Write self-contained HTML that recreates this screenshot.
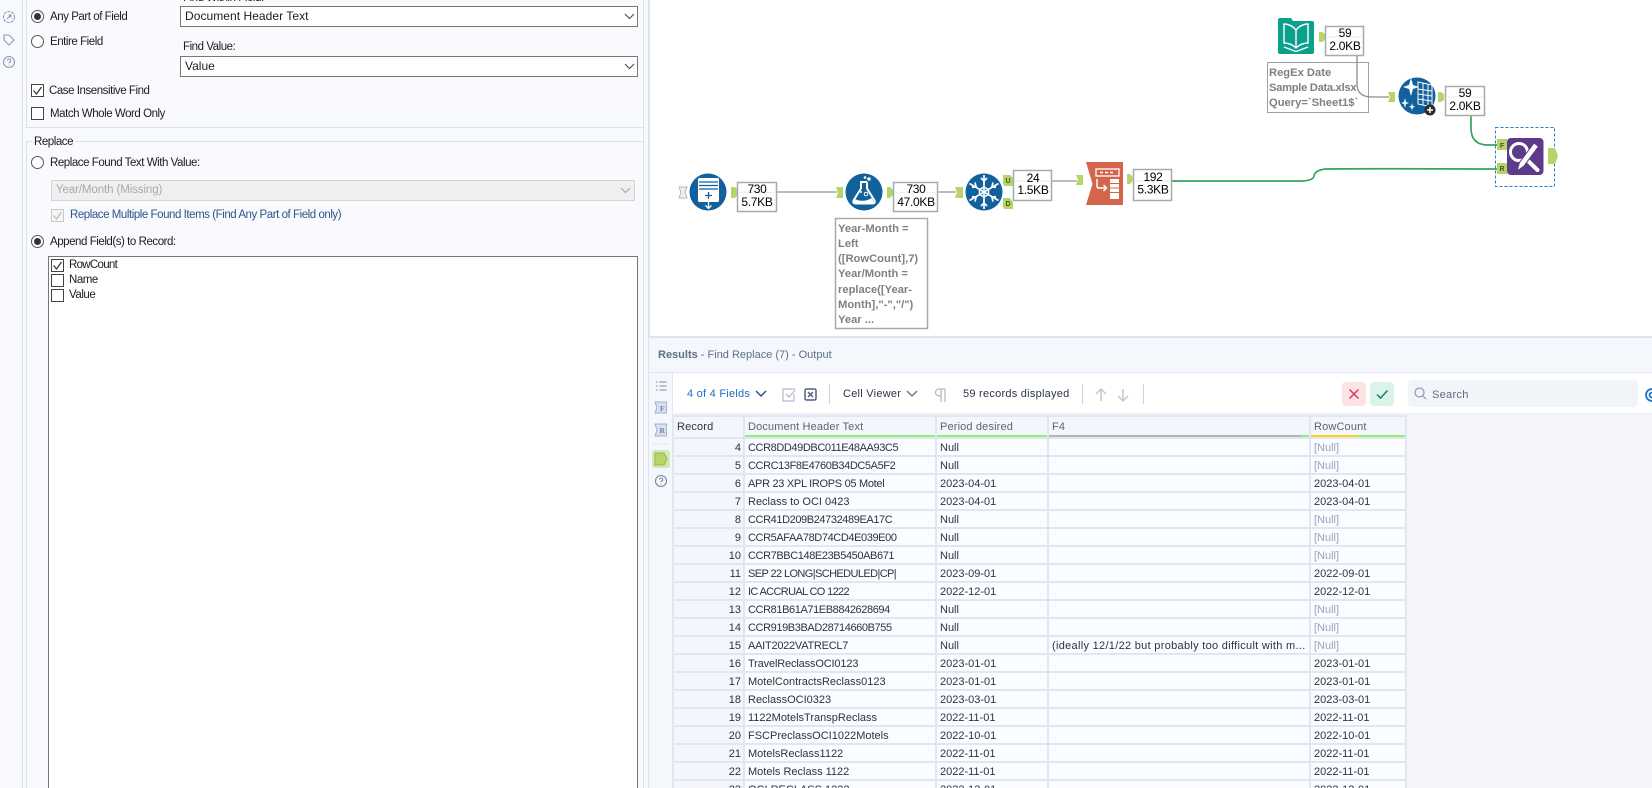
<!DOCTYPE html>
<html><head><meta charset="utf-8"><style>
html,body{margin:0;padding:0;width:1652px;height:788px;overflow:hidden;background:#fff}
body{position:relative;font-family:"Liberation Sans",sans-serif;color:#222}
.a{position:absolute;box-sizing:border-box}
.t{position:absolute;white-space:nowrap;font-size:11.5px;line-height:14px;color:#1c1c1c;letter-spacing:-.45px}
.rad{position:absolute;width:13px;height:13px;border:1px solid #555;border-radius:50%;background:#fff;box-sizing:border-box}
.rad.on:after{content:"";position:absolute;left:2px;top:2px;width:7px;height:7px;border-radius:50%;background:#333}
.chk{position:absolute;width:13px;height:13px;border:1px solid #444;background:#fff;box-sizing:border-box}
.sel{position:absolute;border:1px solid #777;background:#fff;box-sizing:border-box}
table{position:absolute;left:672px;top:415px;border-collapse:separate;border-spacing:2px;background:#dfe7f3;table-layout:fixed;width:735px}
td,th{height:16px;line-height:14px;font-size:11px;font-weight:normal;text-align:left;background:#fbfcff;color:#2a3442;white-space:nowrap;overflow:hidden;padding:2px 0 0 3px;box-sizing:border-box;vertical-align:top}
th{height:20px;padding-top:3px;background:#f4f6fb;color:#56657c;letter-spacing:.15px}
td:first-child{text-align:right;padding-right:2px;padding-left:0;background:#f4f6fb}
th:first-child{color:#2a3442;padding-left:3px}
.n{color:#9aa2c4}
.g{background:linear-gradient(#96ee74,#96ee74) bottom/100% 2px no-repeat,#f4f6fb}
.c{letter-spacing:-.4px}
.d{letter-spacing:-.65px}
</style></head><body>

<!-- left strip -->
<div class="a" style="left:0;top:0;width:22px;height:788px;background:#f7f9fd"></div>
<div class="a" style="left:22px;top:0;width:1px;height:788px;background:#d7dde6"></div>
<div class="a" style="left:23px;top:0;width:620px;height:788px;background:#f9fafd"></div>
<div class="a" style="left:643px;top:0;width:1px;height:788px;background:#dde2ea"></div>
<div class="a" style="left:644px;top:0;width:4px;height:788px;background:#f8f9fc"></div>
<div class="a" style="left:648px;top:0;width:1.5px;height:788px;background:#dbe4f2"></div>
<svg class="a" style="left:0;top:8px" width="22" height="66" fill="none" stroke="#8c9ab3" stroke-width="1.1">
<circle cx="9" cy="9" r="5.5" stroke-dasharray="3 1"/><path d="M7 11l4-4M8.5 7H11V9.5"/>
<path d="M4 28h5l5 5-5 5-5-5z" transform="translate(0,-1)"/>
<circle cx="9" cy="54" r="5.5"/><path d="M7.5 52.500a1.600 1.600 0 1 1 2.300 1.500c-.6.300-.8.600-.8 1.200M9 56.800v.7"/>
</svg>

<!-- Find section -->
<div class="a" style="left:26px;top:-2px;width:1px;height:129px;background:#dde1e7"></div>
<div class="a" style="left:26px;top:127px;width:617px;height:1px;background:#dde1e7"></div>
<div class="t" style="left:183px;top:-9px">Find Within Field:</div>
<div class="rad on" style="left:31px;top:10px"></div>
<div class="t" style="left:50px;top:10px">Any Part of Field</div>
<div class="rad" style="left:31px;top:35px"></div>
<div class="t" style="left:50px;top:35px">Entire Field</div>
<div class="sel" style="left:180px;top:6px;width:458px;height:21px"></div>
<div class="t" style="left:185px;top:9px;font-size:12px;letter-spacing:.05px">Document Header Text</div>
<div class="t" style="left:183px;top:40px">Find Value:</div>
<div class="sel" style="left:180px;top:56px;width:458px;height:21px"></div>
<div class="t" style="left:185px;top:59px;font-size:12px;letter-spacing:0">Value</div>
<svg class="a" style="left:622px;top:10px" width="14" height="64" fill="none" stroke="#555" stroke-width="1.2"><path d="M3 4l4.500 4.500L12 4M3 54l4.500 4.500L12 54"/></svg>
<div class="chk" style="left:31px;top:84px"></div>
<svg class="a" style="left:31px;top:84px" width="13" height="13" fill="none" stroke="#333" stroke-width="1.200"><path d="M2.500 6.500l3 3.500 5-7"/></svg>
<div class="t" style="left:49px;top:84px">Case Insensitive Find</div>
<div class="chk" style="left:31px;top:107px"></div>
<div class="t" style="left:50px;top:107px">Match Whole Word Only</div>

<!-- Replace section -->
<div class="a" style="left:26px;top:141px;width:6px;height:1px;background:#dde1e7"></div>
<div class="a" style="left:76px;top:141px;width:567px;height:1px;background:#dde1e7"></div>
<div class="a" style="left:26px;top:141px;width:1px;height:647px;background:#dde1e7"></div>
<div class="t" style="left:34px;top:135px">Replace</div>
<div class="rad" style="left:31px;top:156px"></div>
<div class="t" style="left:50px;top:156px">Replace Found Text With Value:</div>
<div class="a" style="left:51px;top:180px;width:584px;height:21px;background:#efefef;border:1px solid #d4d4d4"></div>
<div class="t" style="left:56px;top:183px;color:#a8a8a8;letter-spacing:-.1px">Year/Month (Missing)</div>
<svg class="a" style="left:619px;top:186px" width="14" height="10" fill="none" stroke="#aaa" stroke-width="1.200"><path d="M2 2l4.500 4.500L11 2"/></svg>
<div class="chk" style="left:51px;top:209px;border-color:#c9c9c9;background:#f5f5f5"></div>
<svg class="a" style="left:51px;top:209px" width="13" height="13" fill="none" stroke="#bdbdbd" stroke-width="1.200"><path d="M2.500 6.500l3 3.500 5-7"/></svg>
<div class="t" style="left:70px;top:208px;color:#2f5489">Replace Multiple Found Items (Find Any Part of Field only)</div>
<div class="rad on" style="left:31px;top:235px"></div>
<div class="t" style="left:50px;top:235px">Append Field(s) to Record:</div>
<div class="a" style="left:48px;top:256px;width:590px;height:540px;background:#fff;border:1px solid #777"></div>
<div class="chk" style="left:51px;top:259px"></div>
<svg class="a" style="left:51px;top:259px" width="13" height="13" fill="none" stroke="#333" stroke-width="1.200"><path d="M2.500 6.500l3 3.500 5-7"/></svg>
<div class="t" style="left:69px;top:258px;letter-spacing:-.7px">RowCount</div>
<div class="chk" style="left:51px;top:274px"></div>
<div class="t" style="left:69px;top:273px">Name</div>
<div class="chk" style="left:51px;top:289px"></div>
<div class="t" style="left:69px;top:288px">Value</div>

<!-- Canvas -->
<svg class="a" style="left:650px;top:0" width="1002" height="336" viewBox="650 0 1002 336">
<style>
.b{fill:#fff;stroke:#a9a9a9;stroke-width:1.500}
.n1{font:12px "Liberation Sans",sans-serif;letter-spacing:-.3px;fill:#000;text-anchor:middle}
.an{font:bold 11.200px "Liberation Sans",sans-serif;fill:#808080}
.anc{fill:#b5d568}
.l{fill:none;stroke:#a7a7a7;stroke-width:1.500}
.gl{fill:none;stroke:#35a45c;stroke-width:1.700}
.mid{stroke:#eef2ee;stroke-width:1.500}
.lt{font:bold 7px "Liberation Sans",sans-serif;fill:#3d5a2a;text-anchor:middle}
</style>
<!-- connectors -->
<path class="l" d="M777 192H837M938 192H956M1052 181H1077"/>
<path class="gl" d="M1172 181H1300Q1313 181 1314 176Q1315 170 1326 169Q1340 168.500 1497 169"/>
<path class="gl" d="M1471 116V128Q1471 145 1488 145H1497"/>

<!-- input tool -->
<path d="M679 187h8l-2 5.500 2 5.500h-8l2-5.500z" fill="#eee" stroke="#b5b5b5"/>
<circle cx="708" cy="192" r="18.500" fill="#12609c"/>
<rect x="698" y="178" width="21" height="24" rx="1.500" fill="#fff"/>
<path d="M699 182h19M699 185.500h19M699 189h19" stroke="#12609c" stroke-width="1.300"/>
<path d="M708.500 192v7M705 195.500h7" stroke="#12609c" stroke-width="1.300"/>
<path d="M708.500 202v6M705.500 205.500l3 3 3-3" stroke="#fff" stroke-width="1.300" fill="none"/>
<path class="anc" d="M731 187h4l3 3v4l-3 4h-4z"/>
<rect class="b" x="737.500" y="182.500" width="39" height="29"/>
<path class="mid" d="M739 192.500h36"/>
<text class="n1" x="757" y="193">730</text><text class="n1" x="757" y="206">5.7KB</text>

<!-- formula -->
<path class="anc" d="M836 187h7v11h-7l2-5.500z"/>
<circle cx="864" cy="192" r="18.500" fill="#12609c"/>
<g transform="translate(0,2)">
<path d="M860 180h7M861 180v6.500l-7.500 12q-1 3 2 3h17q3 0 2-3l-7.500-12v-6.500" fill="none" stroke="#fff" stroke-width="2"/>
<path d="M855 197q8 4 17-1l2 5h-21z" fill="#fff"/>
<circle cx="866" cy="192" r="1.800" fill="none" stroke="#fff"/><circle cx="861" cy="190" r="1" fill="#fff"/>
<circle cx="865" cy="175.500" r="1.300" fill="#fff"/><circle cx="869" cy="177" r="1.800" fill="#fff"/>
</g>
<path class="anc" d="M887 187h3l3 3v5l-3 3h-3z"/>
<rect class="b" x="893.500" y="182.500" width="44" height="29"/>
<path class="mid" d="M895 192.500h41"/>
<text class="n1" x="916" y="193">730</text><text class="n1" x="916" y="206">47.0KB</text>
<rect class="b" x="835.500" y="218.500" width="92" height="110" stroke-width="1"/>
<text class="an"><tspan x="838" y="232">Year-Month =</tspan><tspan x="838" y="247">Left</tspan><tspan x="838" y="262">([RowCount],7)</tspan><tspan x="838" y="277">Year/Month =</tspan><tspan x="838" y="293">replace([Year-</tspan><tspan x="838" y="308">Month],"-","/")</tspan><tspan x="838" y="323">Year ...</tspan></text>

<!-- unique -->
<path class="anc" d="M955 187h8v11h-8l2-5.500z"/>
<circle cx="984" cy="192" r="18.500" fill="#12609c"/>
<g stroke="#fff" stroke-width="1.700" fill="none">
<path d="M984 175v34M969.500 183.500l29 17M969.500 200.500l29-17"/>
<path d="M981 178l3 3 3-3M981 206l3-3 3 3M972 187.500l4-1-1-4M996 196.500l-4 1 1 4M972 196.500l4 1-1 4M996 187.500l-4-1 1-4"/>
<path d="M984 187l4.500 2.500v5L984 197l-4.500-2.500v-5z" stroke-width="1.500"/>
</g>
<path class="anc" d="M1003 175h7l3 3v8h-7q-3 0-3-3zM1003 198h7l3 4v7h-7q-3 0-3-3z"/>
<text class="lt" x="1008" y="183">U</text><text class="lt" x="1008" y="206">D</text>
<rect class="b" x="1013.500" y="170.500" width="38" height="30"/>
<path class="mid" d="M1015 181h35"/>
<text class="n1" x="1033" y="182">24</text><text class="n1" x="1033" y="194">1.5KB</text>

<!-- red tool -->
<path class="anc" d="M1076 175h7v10h-7l2-5z"/>
<path d="M1086 162h37v43h-37l6.500-21z" fill="#d4654a"/>
<rect x="1096" y="169" width="23" height="7" fill="none" stroke="#fff" stroke-width="1.300"/>
<path d="M1100 172.500h3M1105 172.500h3M1110 172.500h3" stroke="#fff" stroke-width="1.500"/>
<path d="M1097 179v7q0 2 2 2h7M1103.500 185l3 3-3 3" fill="none" stroke="#fff" stroke-width="1.500"/>
<path d="M1110 179h9v20h-9z" fill="#fff"/>
<path d="M1110 183.500h9M1110 188h9M1110 192.500h9" stroke="#d4654a" stroke-width="1.100"/>
<path class="anc" d="M1127 174h3l2.500 2.500v5l-2.500 2.500h-3z"/>
<rect class="b" x="1133.500" y="169.500" width="38" height="31"/>
<path class="mid" d="M1135 181h35"/>
<text class="n1" x="1153" y="181">192</text><text class="n1" x="1153" y="193.500">5.3KB</text>

<!-- book -->
<path d="M1280 18h11l2 3h19q2 0 2 2v29q0 2-2 2h-32q-2 0-2-2V20q0-2 2-2z" fill="#0aa08e"/>
<path d="M1296 30q-5-6-12-6v19q7 0 12 5 5-5 12-5V24q-7 0-12 6zM1296 30v18" fill="none" stroke="#fff" stroke-width="1.400"/>
<path d="M1284 47l12 4.500 12-4.500" fill="none" stroke="#fff" stroke-width="1.400"/>
<path class="anc" d="M1319 32h3l3 2v6l-3 2h-3z"/>
<rect class="b" x="1325.500" y="26.500" width="38" height="29"/>
<path class="mid" d="M1327 37h35"/>
<text class="n1" x="1345" y="37">59</text><text class="n1" x="1345" y="50">2.0KB</text>
<rect x="1267.500" y="62.500" width="101" height="50" fill="none" stroke="#a0a0a0"/>
<text class="an"><tspan x="1269" y="76">RegEx Date</tspan><tspan x="1269" y="91" letter-spacing="-.3">Sample Data.xlsx</tspan><tspan x="1269" y="106">Query=`Sheet1$`</tspan></text>
<path d="M1357 56V84Q1357 97 1372 97H1389" fill="none" stroke="#8e8e8e" stroke-width="1.300"/>

<!-- append -->
<path class="anc" d="M1388 92h7v10h-7l2-5z"/>
<circle cx="1417" cy="96" r="18.500" fill="#12609c"/>
<path d="M1411 78l2 7 6 2-6 2-2 7-2-7-6-2 6-2zM1405 98l1 4 3 1-3 1-1 4-1-4-3-1 3-1zM1412 103l.8 3 2.500.8-2.500.8-.8 3-.8-3-2.500-.8 2.500-.8z" fill="#fff"/>
<path d="M1418 82l14 3v22l-14-3zM1418 89l14 2M1418 94l14 2M1418 99l14 2M1423 83v22M1428 84v22" fill="none" stroke="#fff" stroke-width="1"/>
<circle cx="1430" cy="110" r="5.500" fill="#2b2b2b"/>
<path d="M1430 107v6M1427 110h6" stroke="#fff" stroke-width="1.500"/>
<path class="anc" d="M1438 92h3l3 2v6l-3 2h-3z"/>
<rect class="b" x="1445.500" y="86.500" width="39" height="29"/>
<path class="mid" d="M1447 97h36"/>
<text class="n1" x="1465" y="97">59</text><text class="n1" x="1465" y="110">2.0KB</text>

<!-- find replace -->
<rect x="1495.500" y="127.500" width="59" height="59" fill="none" stroke="#1f7fd4" stroke-dasharray="3 2"/>
<rect x="1497" y="139" width="10" height="11" fill="#b5d568"/><rect x="1497" y="163" width="10" height="11" fill="#b5d568"/>
<text class="lt" x="1502" y="148">F</text><text class="lt" x="1502" y="171">R</text>
<rect x="1507" y="138" width="36.500" height="37" rx="4" fill="#5c3b8b"/>
<circle cx="1519" cy="152" r="8.500" fill="none" stroke="#fff" stroke-width="3"/>
<path d="M1525 158l12.500 12" stroke="#fff" stroke-width="4" stroke-linecap="round"/>
<path d="M1517 171l2.500-8.500L1534 143l4.500 3.500-14.500 19.500z" fill="#fff" stroke="#5c3b8b" stroke-width="1"/>
<path d="M1548 148h7l3 8-3 8h-7z" fill="#b5d568"/>
</svg>

<!-- Results -->
<div class="a" style="left:649px;top:336px;width:1003px;height:2px;background:#dbe4f2"></div>
<div class="a" style="left:649px;top:338px;width:1003px;height:34px;background:#f4f7fc"></div>
<div class="a" style="left:649px;top:372px;width:1003px;height:1px;background:#dfe6f2"></div>
<div class="t" style="left:658px;top:348px;font-size:11px;color:#5f6f85;letter-spacing:0"><b>Results</b> - Find Replace (7) - Output</div>
<div class="a" style="left:649px;top:373px;width:24px;height:415px;background:#f4f7fc;border-right:1px solid #dfe6f2"></div>
<div class="a" style="left:674px;top:414px;width:978px;height:374px;background:#f4f6fb"></div>
<div class="a" style="left:674px;top:413px;width:978px;height:1px;background:#ecf0f6"></div>
<svg class="a" style="left:649px;top:373px" width="24" height="125" fill="none">
<path d="M7 9h1.500M7 13h1.500M7 17h1.500M10.500 9h7M10.500 13h7M10.500 17h7" stroke="#7f8ea8" stroke-width="1.100"/>
<path d="M6 29h11.500v11H6l2-5.500z" fill="#d7dff0" stroke="#a3b2cd"/>
<path d="M6 51h11.500v12H6l2-6z" fill="#d7dff0" stroke="#a3b2cd"/>
<text x="11" y="38" font-size="7.500" font-weight="bold" font-family="Liberation Serif" fill="#6f81a3">F</text>
<text x="10.500" y="60" font-size="7.500" font-weight="bold" font-family="Liberation Serif" fill="#6f81a3">R</text>
<path d="M4 71h16" stroke="#e2e7ef"/>
<rect x="3" y="77" width="18" height="18" rx="3" fill="#d3e8b6"/>
<path d="M6 80h9l3 6-3 6H6z" fill="#b5d568" stroke="#93b84d"/>
<circle cx="12" cy="108" r="5.500" stroke="#7b879b" stroke-width="1.100"/>
<path d="M10.500 106.500a1.600 1.600 0 1 1 2.300 1.500c-.6.300-.8.600-.8 1.200M12 110.800v.7" stroke="#7b879b"/>
</svg>

<!-- toolbar -->
<div class="t" style="left:687px;top:387px;font-size:11px;color:#1c6fc4;letter-spacing:.25px">4 of 4 Fields</div>
<div class="t" style="left:843px;top:387px;font-size:11px;color:#2b3646;letter-spacing:.25px">Cell Viewer</div>
<div class="t" style="left:963px;top:387px;font-size:11px;color:#2b3646;letter-spacing:.25px">59 records displayed</div>
<div class="a" style="left:829px;top:384px;width:1px;height:20px;background:#c9d1dd"></div>
<div class="a" style="left:1082px;top:384px;width:1px;height:20px;background:#c9d1dd"></div>
<div class="a" style="left:1143px;top:384px;width:1px;height:20px;background:#c9d1dd"></div>
<svg class="a" style="left:750px;top:380px" width="400" height="30" fill="none">
<path d="M6 11l5 5 5-5" stroke="#24558f" stroke-width="1.500"/>
<path d="M45 9h-12v12h11V14" stroke="#b5bdc9" stroke-width="1.300"/><path d="M36 14l3 3 6-7" stroke="#b5bdc9" stroke-width="1.300"/>
<rect x="55" y="9" width="11" height="11" rx="1.500" stroke="#4f6281" stroke-width="1.500"/><path d="M58 12l5 5M63 12l-5 5" stroke="#4f6281" stroke-width="1.500"/>
<path d="M157 11l5 5 5-5" stroke="#5f7087" stroke-width="1.300"/>
<path d="M195 9h-6a3.500 3.500 0 0 0 0 7h2v6M191 9v13M195 9v13" stroke="#b5b9c0" stroke-width="1.300"/>
<path d="M351 9v12M346 14l5-5 5 5M373 9v12M368 16l5 5 5-5" stroke="#c2c6cc" stroke-width="1.500"/>
</svg>
<div class="a" style="left:1342px;top:382px;width:24px;height:24px;background:#fde3e6;border-radius:4px"></div>
<div class="a" style="left:1370px;top:382px;width:24px;height:24px;background:#dcf3ec;border-radius:4px"></div>
<svg class="a" style="left:1342px;top:382px" width="52" height="24" fill="none"><path d="M7.500 7.500l9 9M16.500 7.500l-9 9" stroke="#dc3a52" stroke-width="1.500"/><path d="M35 12.500l3.500 3.500 7-7.500" stroke="#15835f" stroke-width="1.500"/></svg>
<div class="a" style="left:1408px;top:380px;width:230px;height:27px;background:#f1f4f9;border-radius:4px"></div>
<svg class="a" style="left:1413px;top:386px" width="15" height="15" fill="none" stroke="#8a9ab5" stroke-width="1.200"><circle cx="6.500" cy="6.500" r="4.500"/><path d="M10 10l3 3"/></svg>
<div class="t" style="left:1432px;top:388px;font-size:11px;color:#5e6d84;letter-spacing:.3px">Search</div>
<svg class="a" style="left:1640px;top:385px" width="12" height="20" fill="none" stroke="#1c74c9" stroke-width="1.800"><circle cx="12" cy="10" r="6"/><circle cx="12" cy="10" r="2.500"/></svg>

<!-- table -->
<table>
<colgroup><col style="width:69px"><col style="width:190px"><col style="width:110px"><col style="width:260px"><col style="width:94px"></colgroup>
<tr><th>Record</th><th class="g">Document Header Text</th><th class="g">Period desired</th><th style="background:linear-gradient(90deg,#b5b5b5 252px,#96ee74 252px) bottom/100% 2px no-repeat,#f4f6fb">F4</th><th style="background:linear-gradient(90deg,#ffd21e 47px,#96ee74 47px) bottom/100% 2px no-repeat,#f4f6fb">RowCount</th></tr>
<tr><td>4</td><td class="c">CCR8DD49DBC011E48AA93C5</td><td>Null</td><td></td><td class="n">[Null]</td></tr>
<tr><td>5</td><td class="c">CCRC13F8E4760B34DC5A5F2</td><td>Null</td><td></td><td class="n">[Null]</td></tr>
<tr><td>6</td><td style="letter-spacing:-.3px">APR 23 XPL IROPS 05 Motel</td><td>2023-04-01</td><td></td><td>2023-04-01</td></tr>
<tr><td>7</td><td>Reclass to OCI 0423</td><td>2023-04-01</td><td></td><td>2023-04-01</td></tr>
<tr><td>8</td><td class="c">CCR41D209B24732489EA17C</td><td>Null</td><td></td><td class="n">[Null]</td></tr>
<tr><td>9</td><td class="c">CCR5AFAA78D74CD4E039E00</td><td>Null</td><td></td><td class="n">[Null]</td></tr>
<tr><td>10</td><td class="c">CCR7BBC148E23B5450AB671</td><td>Null</td><td></td><td class="n">[Null]</td></tr>
<tr><td>11</td><td style="letter-spacing:-.6px">SEP 22 LONG|SCHEDULED|CP|</td><td>2023-09-01</td><td></td><td>2022-09-01</td></tr>
<tr><td>12</td><td class="d">IC ACCRUAL CO 1222</td><td>2022-12-01</td><td></td><td>2022-12-01</td></tr>
<tr><td>13</td><td class="c">CCR81B61A71EB8842628694</td><td>Null</td><td></td><td class="n">[Null]</td></tr>
<tr><td>14</td><td class="c">CCR919B3BAD28714660B755</td><td>Null</td><td></td><td class="n">[Null]</td></tr>
<tr><td>15</td><td style="letter-spacing:-.25px">AAIT2022VATRECL7</td><td>Null</td><td style="letter-spacing:.3px">(ideally 12/1/22 but probably too difficult with m...</td><td class="n">[Null]</td></tr>
<tr><td>16</td><td style="letter-spacing:-.15px">TravelReclassOCI0123</td><td>2023-01-01</td><td></td><td>2023-01-01</td></tr>
<tr><td>17</td><td>MotelContractsReclass0123</td><td>2023-01-01</td><td></td><td>2023-01-01</td></tr>
<tr><td>18</td><td>ReclassOCI0323</td><td>2023-03-01</td><td></td><td>2023-03-01</td></tr>
<tr><td>19</td><td>1122MotelsTranspReclass</td><td>2022-11-01</td><td></td><td>2022-11-01</td></tr>
<tr><td>20</td><td>FSCPreclassOCI1022Motels</td><td>2022-10-01</td><td></td><td>2022-10-01</td></tr>
<tr><td>21</td><td>MotelsReclass1122</td><td>2022-11-01</td><td></td><td>2022-11-01</td></tr>
<tr><td>22</td><td>Motels Reclass 1122</td><td>2022-11-01</td><td></td><td>2022-11-01</td></tr>
<tr><td>23</td><td>OCI RECLASS 1222</td><td>2022-12-01</td><td></td><td>2022-12-01</td></tr>
</table>
</body></html>
